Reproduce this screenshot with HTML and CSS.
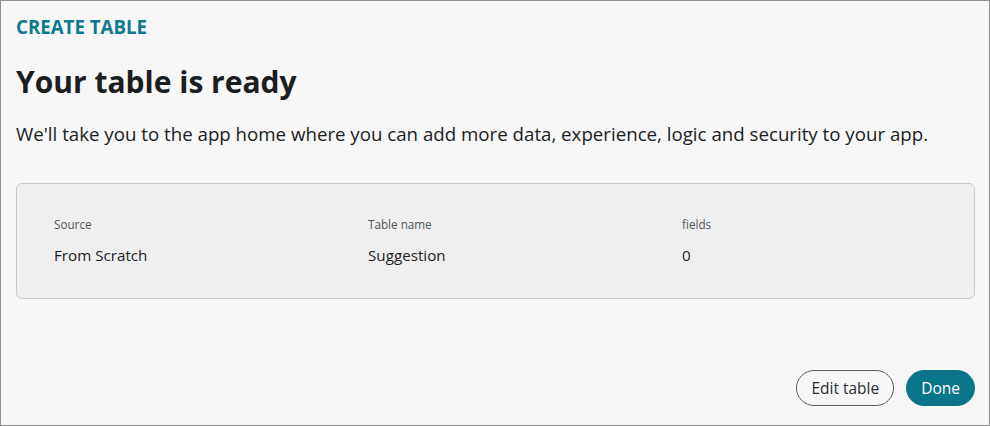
FILE: index.html
```html
<!DOCTYPE html>
<html lang="en">
<head>
    <meta charset="UTF-8">
    <meta name="viewport" content="width=device-width, initial-scale=1.0">
    <title>Create Table</title>
    <link rel="stylesheet" href="styles.css">
</head>
<body>
    <div class="dialog">
        <div class="eyebrow">CREATE TABLE</div>
        <h1 class="title">Your table is ready</h1>
        <p class="intro">We'll take you to the app home where you can add more data, experience, logic and security to your app.</p>

        <div class="summary">
            <div class="summary-item">
                <div class="summary-label">Source</div>
                <div class="summary-value">From Scratch</div>
            </div>
            <div class="summary-item">
                <div class="summary-label">Table name</div>
                <div class="summary-value">Suggestion</div>
            </div>
            <div class="summary-item">
                <div class="summary-label">fields</div>
                <div class="summary-value">0</div>
            </div>
        </div>

        <div class="actions">
            <button class="btn btn-outline">Edit table</button>
            <button class="btn btn-primary">Done</button>
        </div>
    </div>
</body>
</html>
```

FILE: styles.css
```css
* {
    box-sizing: border-box;
}

body {
    font-family: "Open Sans", "Noto Sans", Arial, sans-serif;
    background-color: #f6f7f6;
    margin: 0;
    padding: 0;
    color: #1b1d1e;
}

.dialog {
    width: 990px;
    height: 426px;
    border: 1px solid #8f8f8f;
    padding: 13px 14px 19px 15px;
    display: flex;
    flex-direction: column;
}

.eyebrow {
    font-size: 18.7px;
    line-height: 26px;
    font-weight: 700;
    color: #0c7a8e;
}

.title {
    font-size: 30px;
    line-height: 38px;
    font-weight: 700;
    margin: 23px 0 0 0;
}

.intro {
    font-size: 18.7px;
    line-height: 26px;
    margin: 20px 0 0 0;
}

.summary {
    margin-top: 36px;
    height: 116px;
    background-color: #efefef;
    border: 1px solid #c8c9c9;
    border-radius: 6px;
    padding: 32px 37px 0 37px;
    display: grid;
    grid-template-columns: repeat(3, 314px);
    align-content: start;
}

.summary-label {
    font-size: 11.7px;
    line-height: 16px;
    color: #505657;
}

.summary-value {
    font-size: 15.2px;
    line-height: 21px;
    margin-top: 13px;
    color: #1b1d1e;
}

.actions {
    margin-top: auto;
    display: flex;
    justify-content: flex-end;
    gap: 12px;
}

.btn {
    font-family: inherit;
    font-size: 15.5px;
    height: 36px;
    border-radius: 18px;
    padding: 0 14px;
    cursor: pointer;
}

.btn-outline {
    background-color: transparent;
    border: 1px solid #5a5d5e;
    color: #2a2d2e;
}

.btn-primary {
    background-color: #0a7589;
    border: 1px solid #0a7589;
    color: #ffffff;
}
```
